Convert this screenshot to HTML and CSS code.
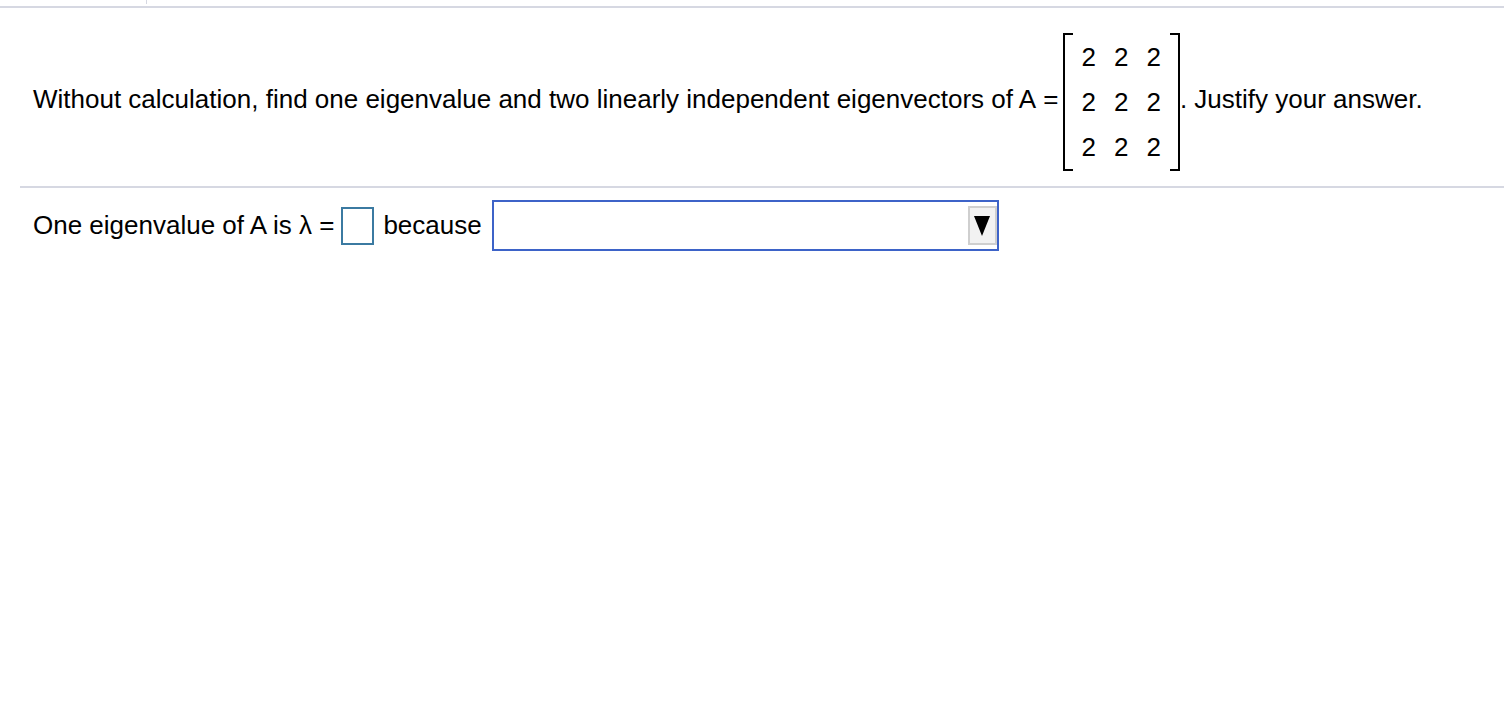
FILE: index.html
```html
<!DOCTYPE html>
<html>
<head>
<meta charset="utf-8">
<link rel="stylesheet" href="styles.css">
</head>
<body>
<div class="topbar"><span class="tick"></span></div>
<div class="question">
  <span class="qtext">Without calculation, find one eigenvalue and two linearly independent eigenvectors of A&nbsp;=</span>
  <div class="matrix">
    <span class="bracket left"></span>
    <div class="cells">
      <div class="mrow"><span>2</span><span>2</span><span>2</span></div>
      <div class="mrow"><span>2</span><span>2</span><span>2</span></div>
      <div class="mrow"><span>2</span><span>2</span><span>2</span></div>
    </div>
    <span class="bracket right"></span>
  </div>
  <span class="qtext">. Justify your answer.</span>
</div>
<div class="divider"></div>
<div class="answer">
  <span class="atext">One eigenvalue of A is λ =</span>
  <span class="inputbox"></span>
  <span class="atext">because</span>
  <div class="select">
    <span class="arrowbtn"><span class="tri"></span></span>
  </div>
</div>
</body>
</html>
```
FILE: styles.css
```css
html, body {
  margin: 0;
  padding: 0;
  background: #ffffff;
}
body {
  font-family: "Liberation Sans", Arial, sans-serif;
  font-size: 26px;
  color: #000;
}
.topbar {
  position: relative;
  height: 6px;
  border-bottom: 2px solid #d6d8e2;
}
.tick {
  position: absolute;
  left: 146px;
  top: 0;
  width: 1px;
  height: 4px;
  background: #d6d8e2;
}
.question {
  display: flex;
  align-items: center;
  height: 138px;
  padding: 25px 0 15px 33px;
}
.qtext {
  white-space: pre;
  padding-bottom: 6px;
}
.matrix {
  display: flex;
  align-items: stretch;
  height: 138px;
  margin-left: 4px;
}
.bracket {
  width: 8px;
  border-top: 2px solid #000;
  border-bottom: 2px solid #000;
}
.bracket.left {
  border-left: 2px solid #000;
}
.bracket.right {
  border-right: 2px solid #000;
}
.cells {
  display: flex;
  flex-direction: column;
  justify-content: center;
  padding: 0 9px 0 9px;
  gap: 15px;
}
.mrow {
  display: flex;
  gap: 18px;
  line-height: 30px;
}
.divider {
  margin-left: 20px;
  border-top: 2px solid #d6d8e2;
}
.answer {
  display: flex;
  align-items: center;
  padding: 12px 0 0 33px;
}
.inputbox {
  width: 29px;
  height: 34px;
  border: 2px solid #3b7aa1;
  margin: 0 9px 0 7px;
}
.select {
  width: 503px;
  height: 47px;
  border: 2px solid #3d63c8;
  margin-left: 10px;
  display: flex;
  justify-content: flex-end;
  align-items: center;
}
.arrowbtn {
  width: 25px;
  height: 35px;
  background: #f2f2f2;
  border: 2px solid #cfcfcf;
  display: flex;
  align-items: center;
  justify-content: center;
}
.tri {
  width: 0;
  height: 0;
  border-left: 8px solid transparent;
  border-right: 8px solid transparent;
  border-top: 20px solid #000;
}
```
